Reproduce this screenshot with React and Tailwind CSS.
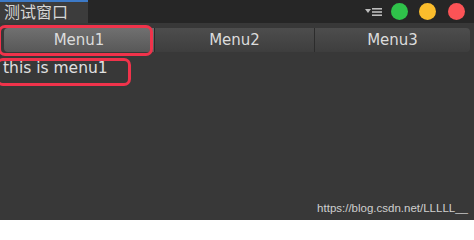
export default function App() {
  const font = { fontFamily: '"DejaVu Sans", "Noto Sans CJK SC", sans-serif' };
  return (
    <div className="w-[474px] h-[220px] bg-[#383838] flex flex-col relative overflow-hidden" style={font}>
      {/* top bar */}
      <div className="h-[23px] bg-[#262626] flex items-stretch">
        <div className="w-[88px] bg-[#3c3c3c] border-t-2 border-[#3d7ac7] flex items-center pl-[4px] text-[16px] text-[#d6d6d6] leading-none">
          测试窗口
        </div>
        <div className="flex-1" />
        <div className="flex items-center mr-[3px]">
          <svg width="18" height="10" viewBox="0 0 18 10" className="mr-[8px]">
            <polygon points="0,2 6,2 3,6" fill="#bdbdbd" />
            <rect x="7" y="1" width="10" height="1.6" fill="#bdbdbd" />
            <rect x="7" y="4.2" width="10" height="1.6" fill="#bdbdbd" />
            <rect x="7" y="7.4" width="10" height="1.6" fill="#bdbdbd" />
          </svg>
          <div className="w-[17px] h-[17px] rounded-full bg-[#2fc24a] mr-[11px]" />
          <div className="w-[17px] h-[17px] rounded-full bg-[#fbbd2c] mr-[12px]" />
          <div className="w-[17px] h-[17px] rounded-full bg-[#fb5356] mr-[6px]" />
        </div>
      </div>
      {/* menu bar */}
      <div className="mt-[5px] mx-[4px] h-[24px] flex text-[15px] text-[#dcdcdc] leading-none">
        <div className="w-[151px] rounded-l-[4px] bg-gradient-to-b from-[#707070] to-[#585858] border-r border-[#2a2a2a] flex items-center justify-center">
          Menu1
        </div>
        <div className="w-[160px] bg-gradient-to-b from-[#4d4d4d] to-[#3e3e3e] border-r border-[#2c2c2c] flex items-center justify-center">
          Menu2
        </div>
        <div className="flex-1 rounded-r-[4px] bg-gradient-to-b from-[#4d4d4d] to-[#3e3e3e] flex items-center justify-center">
          Menu3
        </div>
      </div>
      <div className="mt-[9px] pl-[3px] text-[15.5px] text-[#e0e0e0] leading-none">
        this is menu1
      </div>
      <div className="flex-1" />
      <div className="self-end mr-[6px] mb-[6px] text-[11.5px] text-[#cfcfcf] leading-none" style={{ fontFamily: '"Liberation Sans", sans-serif' }}>
        https://blog.csdn.net/LLLLL__
      </div>
      {/* red annotation outlines */}
      <div className="absolute left-[-2px] top-[25px] w-[155px] h-[31px] border-[3px] border-[#f0334b] rounded-[7px]" />
      <div className="absolute left-[-4px] top-[58px] w-[135px] h-[28px] border-[3px] border-[#f0334b] rounded-[7px]" />
    </div>
  );
}
